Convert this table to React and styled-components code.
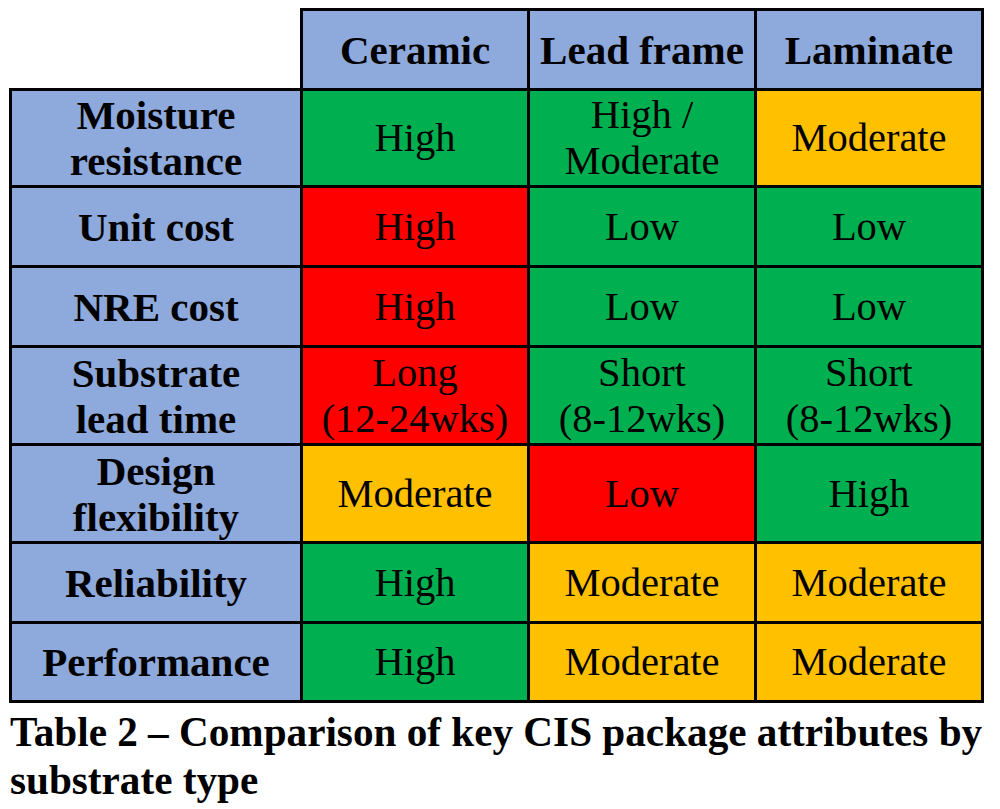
import React from "react";
import styled, { createGlobalStyle } from "styled-components";

const GlobalStyle = createGlobalStyle`
  html, body {
    margin: 0;
    padding: 0;
    background: #ffffff;
  }
`;

const COLORS = {
  head: "#8EA9DB",
  green: "#00B050",
  red: "#FF0000",
  amber: "#FFC000",
};

const Page = styled.div`
  width: 1000px;
  height: 809px;
  padding: 8px 0 0 9px;
  box-sizing: border-box;
  font-family: "Liberation Serif", "Times New Roman", Times, serif;
  color: #000000;
`;

const Grid = styled.div`
  display: grid;
  grid-template-columns: 288px 224px 224px 224px;
  grid-template-rows: 77px 94px 77px 77px 95px 95px 77px 76px;
  gap: 3px;
  padding: 3px;
  width: max-content;
  background: #000000;
`;

const Corner = styled.div`
  background: #ffffff;
  margin: -3px 0 0 -3px;
`;

const Cell = styled.div`
  display: flex;
  align-items: center;
  justify-content: center;
  text-align: center;
  background: ${({ $bg }) => $bg};
  font-size: ${({ $bold }) => ($bold ? "41px" : "40.5px")};
  line-height: 46px;
  font-weight: ${({ $bold }) => ($bold ? 700 : 400)};
  white-space: nowrap;
`;

const Caption = styled.p`
  margin: 5px 0 0 1px;
  width: 990px;
  font-size: 41.2px;
  line-height: 48px;
  font-weight: 700;
`;

const columns = ["Ceramic", "Lead frame", "Laminate"];

const rows = [
  {
    label: ["Moisture", "resistance"],
    cells: [
      { text: ["High"], c: "green" },
      { text: ["High /", "Moderate"], c: "green" },
      { text: ["Moderate"], c: "amber" },
    ],
  },
  {
    label: ["Unit cost"],
    cells: [
      { text: ["High"], c: "red" },
      { text: ["Low"], c: "green" },
      { text: ["Low"], c: "green" },
    ],
  },
  {
    label: ["NRE cost"],
    cells: [
      { text: ["High"], c: "red" },
      { text: ["Low"], c: "green" },
      { text: ["Low"], c: "green" },
    ],
  },
  {
    label: ["Substrate", "lead time"],
    cells: [
      { text: ["Long", "(12-24wks)"], c: "red" },
      { text: ["Short", "(8-12wks)"], c: "green" },
      { text: ["Short", "(8-12wks)"], c: "green" },
    ],
  },
  {
    label: ["Design", "flexibility"],
    cells: [
      { text: ["Moderate"], c: "amber" },
      { text: ["Low"], c: "red" },
      { text: ["High"], c: "green" },
    ],
  },
  {
    label: ["Reliability"],
    cells: [
      { text: ["High"], c: "green" },
      { text: ["Moderate"], c: "amber" },
      { text: ["Moderate"], c: "amber" },
    ],
  },
  {
    label: ["Performance"],
    cells: [
      { text: ["High"], c: "green" },
      { text: ["Moderate"], c: "amber" },
      { text: ["Moderate"], c: "amber" },
    ],
  },
];

const Lines = ({ lines }) =>
  lines.map((l, i) => (
    <React.Fragment key={i}>
      {i > 0 && <br />}
      {l}
    </React.Fragment>
  ));

export default function App() {
  return (
    <Page>
      <GlobalStyle />
      <Grid>
        <Corner />
        {columns.map((c) => (
          <Cell key={c} $bg={COLORS.head} $bold>
            {c}
          </Cell>
        ))}
        {rows.map((r, ri) => (
          <React.Fragment key={ri}>
            <Cell $bg={COLORS.head} $bold>
              <span>
                <Lines lines={r.label} />
              </span>
            </Cell>
            {r.cells.map((cell, ci) => (
              <Cell key={ci} $bg={COLORS[cell.c]}>
                <span>
                  <Lines lines={cell.text} />
                </span>
              </Cell>
            ))}
          </React.Fragment>
        ))}
      </Grid>
      <Caption>
        Table 2 – Comparison of key CIS package attributes by substrate type
      </Caption>
    </Page>
  );
}
